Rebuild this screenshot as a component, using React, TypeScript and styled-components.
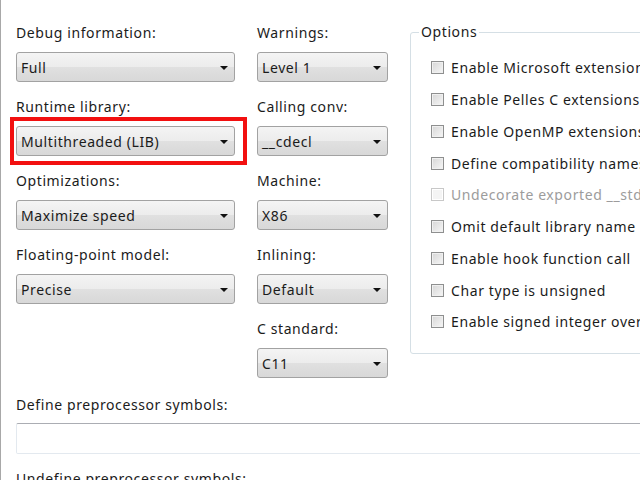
import React from 'react';
import styled, { createGlobalStyle } from 'styled-components';

const GlobalStyle = createGlobalStyle`
  html, body {
    margin: 0;
    padding: 0;
    background: #ffffff;
    overflow: hidden;
  }
  body {
    font-family: "Noto Sans", "Open Sans", "Liberation Sans", sans-serif;
    font-size: 14px;
    letter-spacing: 0.6px;
    color: #1b1b1b;
  }
`;

const Page = styled.div`
  width: 640px;
  height: 480px;
  box-sizing: border-box;
  border-left: 1px solid #a8a8a8;
  padding: 23px 0 0 15px;
  overflow: hidden;
`;

const TopArea = styled.div`
  display: flex;
  align-items: flex-start;
`;

const Column = styled.div<{ $width: number; $gapRight: number }>`
  width: ${({ $width }) => $width}px;
  margin-right: ${({ $gapRight }) => $gapRight}px;
  display: flex;
  flex-direction: column;
  flex-shrink: 0;
`;

const Field = styled.div`
  position: relative;
  display: flex;
  flex-direction: column;
  margin-bottom: 15px;
`;

const Label = styled.div`
  height: 20px;
  line-height: 20px;
  margin-bottom: 9px;
  white-space: nowrap;
`;

const SelectBox = styled.div`
  height: 30px;
  box-sizing: border-box;
  border: 1px solid #a2a2a2;
  border-radius: 3px;
  background: linear-gradient(#f4f4f4 0%, #ececec 50%, #e0e0e0 51%, #d8d8d8 100%);
  display: flex;
  align-items: center;
  justify-content: space-between;
  padding: 0 6px 0 4px;
  white-space: nowrap;
`;

const Arrow = styled.span`
  width: 0;
  height: 0;
  border-left: 4.5px solid transparent;
  border-right: 4.5px solid transparent;
  border-top: 4.5px solid #111;
  margin-top: 1px;
`;

const Highlight = styled.div`
  position: absolute;
  left: -6px;
  top: 20px;
  width: 237px;
  height: 48px;
  box-sizing: border-box;
  border: 4px solid #f21010;
  pointer-events: none;
`;

const Options = styled.fieldset`
  flex: 1;
  margin: -1px -40px 0 -1px;
  padding: 10px 0 18px 20px;
  border: 1px solid #d5dfe5;
  border-radius: 3px;
  min-width: 0;
  height: 332px;
  box-sizing: border-box;
`;

const Legend = styled.legend`
  padding: 0 2px;
  margin-left: -12px;
  line-height: 20px;
`;

const CheckRow = styled.div<{ $disabled?: boolean }>`
  height: 31.75px;
  display: flex;
  align-items: center;
  white-space: nowrap;
  color: ${({ $disabled }) => ($disabled ? '#9c9c9c' : '#1b1b1b')};
`;

const Check = styled.span<{ $disabled?: boolean }>`
  width: 13px;
  height: 13px;
  box-sizing: border-box;
  flex-shrink: 0;
  margin-right: 7px;
  border: 1px solid ${({ $disabled }) => ($disabled ? '#c8c8c8' : '#8e8f8f')};
  background: ${({ $disabled }) => ($disabled ? '#f4f4f4' : 'linear-gradient(135deg, #d6d6d6, #f6f6f6)')};
  box-shadow: inset 0 0 0 1px ${({ $disabled }) => ($disabled ? '#ffffff' : '#f0f0f0')};
`;

const Wide = styled.div`
  margin-top: 2px;
  display: flex;
  flex-direction: column;
`;

const WideLabel = styled(Label)`
  margin-bottom: 8px;
`;

const TextBox = styled.div`
  height: 31px;
  box-sizing: border-box;
  margin-right: -10px;
  border: 1px solid #e3e9ef;
  border-top-color: #abadb3;
  border-radius: 2px;
  background: #fff;
  margin-bottom: 15px;
`;

const leftFields = [
  { label: 'Debug information:', value: 'Full' },
  { label: 'Runtime library:', value: 'Multithreaded (LIB)', marked: true },
  { label: 'Optimizations:', value: 'Maximize speed' },
  { label: 'Floating-point model:', value: 'Precise' },
];

const rightFields = [
  { label: 'Warnings:', value: 'Level 1' },
  { label: 'Calling conv:', value: '__cdecl' },
  { label: 'Machine:', value: 'X86' },
  { label: 'Inlining:', value: 'Default' },
  { label: 'C standard:', value: 'C11' },
];

const options = [
  { text: 'Enable Microsoft extensions' },
  { text: 'Enable Pelles C extensions' },
  { text: 'Enable OpenMP extensions' },
  { text: 'Define compatibility names' },
  { text: 'Undecorate exported __stdcall functions', disabled: true },
  { text: 'Omit default library name in object files' },
  { text: 'Enable hook function call' },
  { text: 'Char type is unsigned' },
  { text: 'Enable signed integer overflow checks' },
];

const Select: React.FC<{ value: string }> = ({ value }) => (
  <SelectBox>
    <span>{value}</span>
    <Arrow />
  </SelectBox>
);

export default function App() {
  return (
    <>
      <GlobalStyle />
      <Page>
        <TopArea>
          <Column $width={219} $gapRight={22}>
            {leftFields.map((f) => (
              <Field key={f.label}>
                <Label>{f.label}</Label>
                <Select value={f.value} />
                {f.marked && <Highlight />}
              </Field>
            ))}
          </Column>
          <Column $width={131} $gapRight={23}>
            {rightFields.map((f) => (
              <Field key={f.label}>
                <Label>{f.label}</Label>
                <Select value={f.value} />
              </Field>
            ))}
          </Column>
          <Options>
            <Legend>Options</Legend>
            {options.map((o) => (
              <CheckRow key={o.text} $disabled={o.disabled}>
                <Check $disabled={o.disabled} />
                {o.text}
              </CheckRow>
            ))}
          </Options>
        </TopArea>
        <Wide>
          <WideLabel>Define preprocessor symbols:</WideLabel>
          <TextBox />
          <WideLabel>Undefine preprocessor symbols:</WideLabel>
        </Wide>
      </Page>
    </>
  );
}
